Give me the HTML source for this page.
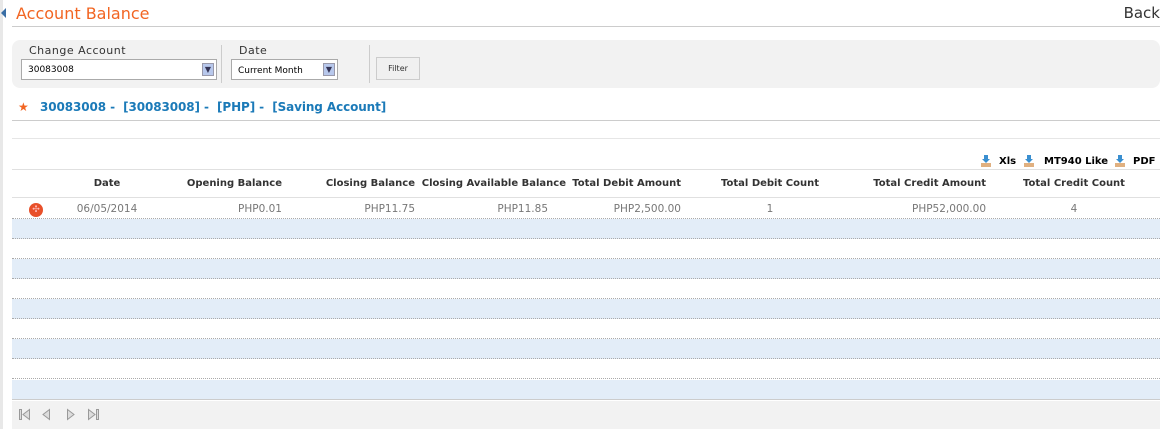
<!DOCTYPE html>
<html><head><meta charset="utf-8"><style>
*{margin:0;padding:0;box-sizing:border-box}
body{width:1164px;height:429px;position:relative;background:#fff;font-family:Verdana,"DejaVu Sans",sans-serif;overflow:hidden}
.a{position:absolute;white-space:nowrap}
.h{font-size:10px;font-weight:bold;color:#333;top:178px}
.d{font-size:10.5px;color:#777;top:203px}
.c{width:200px;text-align:center}
.row{position:absolute;left:12px;width:1148px;height:20px;border-bottom:1px dotted #aaa}
.b{background:#e3edf8}
.dl{position:absolute;top:154px;width:12px;height:14px}
</style></head><body>
<div class="a" style="left:0;top:0;width:3px;height:429px;background:#e8e8e8"></div>
<div class="a" style="left:1px;top:8px;width:0;height:0;border-top:5px solid transparent;border-bottom:5px solid transparent;border-right:5px solid #3a6ea5"></div>
<div class="a" style="left:16px;top:4px;font-size:16px;color:#f26522">Account Balance</div>
<div class="a" style="right:4px;top:4px;font-size:15px;color:#333">Back</div>
<div class="a" style="left:12px;top:26px;width:1148px;height:1px;background:#ccc"></div>

<div class="a" style="left:12px;top:40px;width:1148px;height:48px;background:#f2f2f2;border-radius:8px"></div>
<div class="a" style="left:29px;top:44px;font-size:11px;color:#333;letter-spacing:0.5px">Change Account</div>
<div class="a" style="left:21px;top:59px;width:196px;height:21px;background:#fff;border:1px solid #aaa;font-size:9px;padding:5px 0 0 6px;color:#000">30083008</div>
<div class="a" style="left:202px;top:63px;width:12px;height:13px;background:#b8c8ec;border:1px solid #99a;color:#335;font-size:8px;text-align:center;line-height:12px">▼</div>
<div class="a" style="left:221px;top:45px;width:1px;height:38px;background:#ccc"></div>
<div class="a" style="left:239px;top:44px;font-size:11px;color:#333;letter-spacing:0.5px">Date</div>
<div class="a" style="left:231px;top:59px;width:107px;height:21px;background:#fff;border:1px solid #aaa;font-size:9px;padding:6px 0 0 6px;color:#000">Current Month</div>
<div class="a" style="left:323px;top:63px;width:12px;height:13px;background:#b8c8ec;border:1px solid #99a;color:#335;font-size:8px;text-align:center;line-height:12px">▼</div>
<div class="a" style="left:369px;top:45px;width:1px;height:38px;background:#ccc"></div>
<div class="a" style="left:376px;top:57px;width:44px;height:23px;background:#f0f0f0;border:1px solid #ccc;font-size:8px;color:#333;text-align:center;line-height:21px">Filter</div>

<div class="a" style="left:18px;top:100px;font-size:12px;color:#f26522">★</div>
<div class="a" style="left:40px;top:100px;font-size:12px;font-weight:bold;color:#1b7ab8;letter-spacing:-0.1px">30083008 -&nbsp; [30083008] -&nbsp; [PHP] -&nbsp; [Saving Account]</div>
<div class="a" style="left:12px;top:120px;width:1148px;height:1px;background:#ccc"></div>
<div class="a" style="left:12px;top:138px;width:1148px;height:1px;background:#e6e6e6"></div>

<svg class="dl" style="left:980px"><path d="M4 1h4v4h2l-4 4-4-4h2z" fill="#3a8fd0"/><path d="M1 9h10v4H1z" fill="#e0b080"/></svg>
<div class="a" style="left:999px;top:156px;font-size:10px;font-weight:bold;color:#000">Xls</div>
<svg class="dl" style="left:1023px"><path d="M4 1h4v4h2l-4 4-4-4h2z" fill="#3a8fd0"/><path d="M1 9h10v4H1z" fill="#e0b080"/></svg>
<div class="a" style="left:1044px;top:156px;font-size:10px;font-weight:bold;color:#000">MT940 Like</div>
<svg class="dl" style="left:1114px"><path d="M4 1h4v4h2l-4 4-4-4h2z" fill="#3a8fd0"/><path d="M1 9h10v4H1z" fill="#e0b080"/></svg>
<div class="a" style="left:1133px;top:156px;font-size:10px;font-weight:bold;color:#000">PDF</div>
<div class="a" style="left:12px;top:169px;width:1148px;height:1px;background:#e0e0e0"></div>

<div class="a h c" style="left:7px">Date</div>
<div class="a h" style="right:882px">Opening Balance</div>
<div class="a h" style="right:749px">Closing Balance</div>
<div class="a h" style="right:598px">Closing Available Balance</div>
<div class="a h" style="right:483px">Total Debit Amount</div>
<div class="a h c" style="left:670px">Total Debit Count</div>
<div class="a h" style="right:178px">Total Credit Amount</div>
<div class="a h c" style="left:974px">Total Credit Count</div>
<div class="a" style="left:12px;top:197px;width:1148px;height:1px;background:#e0e0e0"></div>

<div class="a" style="left:29px;top:203px;width:14px;height:14px;border-radius:50%;background:#e8502a;color:#fbb;font-size:9px;text-align:center;line-height:14px">✣</div>
<div class="a d c" style="left:7px">06/05/2014</div>
<div class="a d" style="right:882px">PHP0.01</div>
<div class="a d" style="right:749px">PHP11.75</div>
<div class="a d" style="right:616px">PHP11.85</div>
<div class="a d" style="right:483px">PHP2,500.00</div>
<div class="a d c" style="left:670px">1</div>
<div class="a d" style="right:178px">PHP52,000.00</div>
<div class="a d c" style="left:974px">4</div>
<div class="row" style="top:198px;height:21px"></div>
<div class="row b" style="top:219px"></div>
<div class="row" style="top:239px"></div>
<div class="row b" style="top:259px"></div>
<div class="row" style="top:279px"></div>
<div class="row b" style="top:299px"></div>
<div class="row" style="top:319px"></div>
<div class="row b" style="top:339px"></div>
<div class="row" style="top:359px"></div>
<div class="row b" style="top:380px;border-bottom:1px solid #ccc"></div>
<div class="a" style="left:12px;top:401px;width:1148px;height:28px;background:#f2f2f2"></div>
<svg class="a" style="left:18px;top:408px" width="85" height="14" fill="#ddd" stroke="#999" stroke-width="1">
<rect x="1.5" y="1.5" width="2" height="10"/><path d="M11.5 1.5 L5 6.5 L11.5 11.5Z"/>
<path d="M31.5 1.5 L25 6.5 L31.5 11.5Z"/>
<path d="M49.5 1.5 L56 6.5 L49.5 11.5Z"/>
<path d="M70.5 1.5 L77 6.5 L70.5 11.5Z"/><rect x="78.5" y="1.5" width="2" height="10"/>
</svg>
</body></html>
